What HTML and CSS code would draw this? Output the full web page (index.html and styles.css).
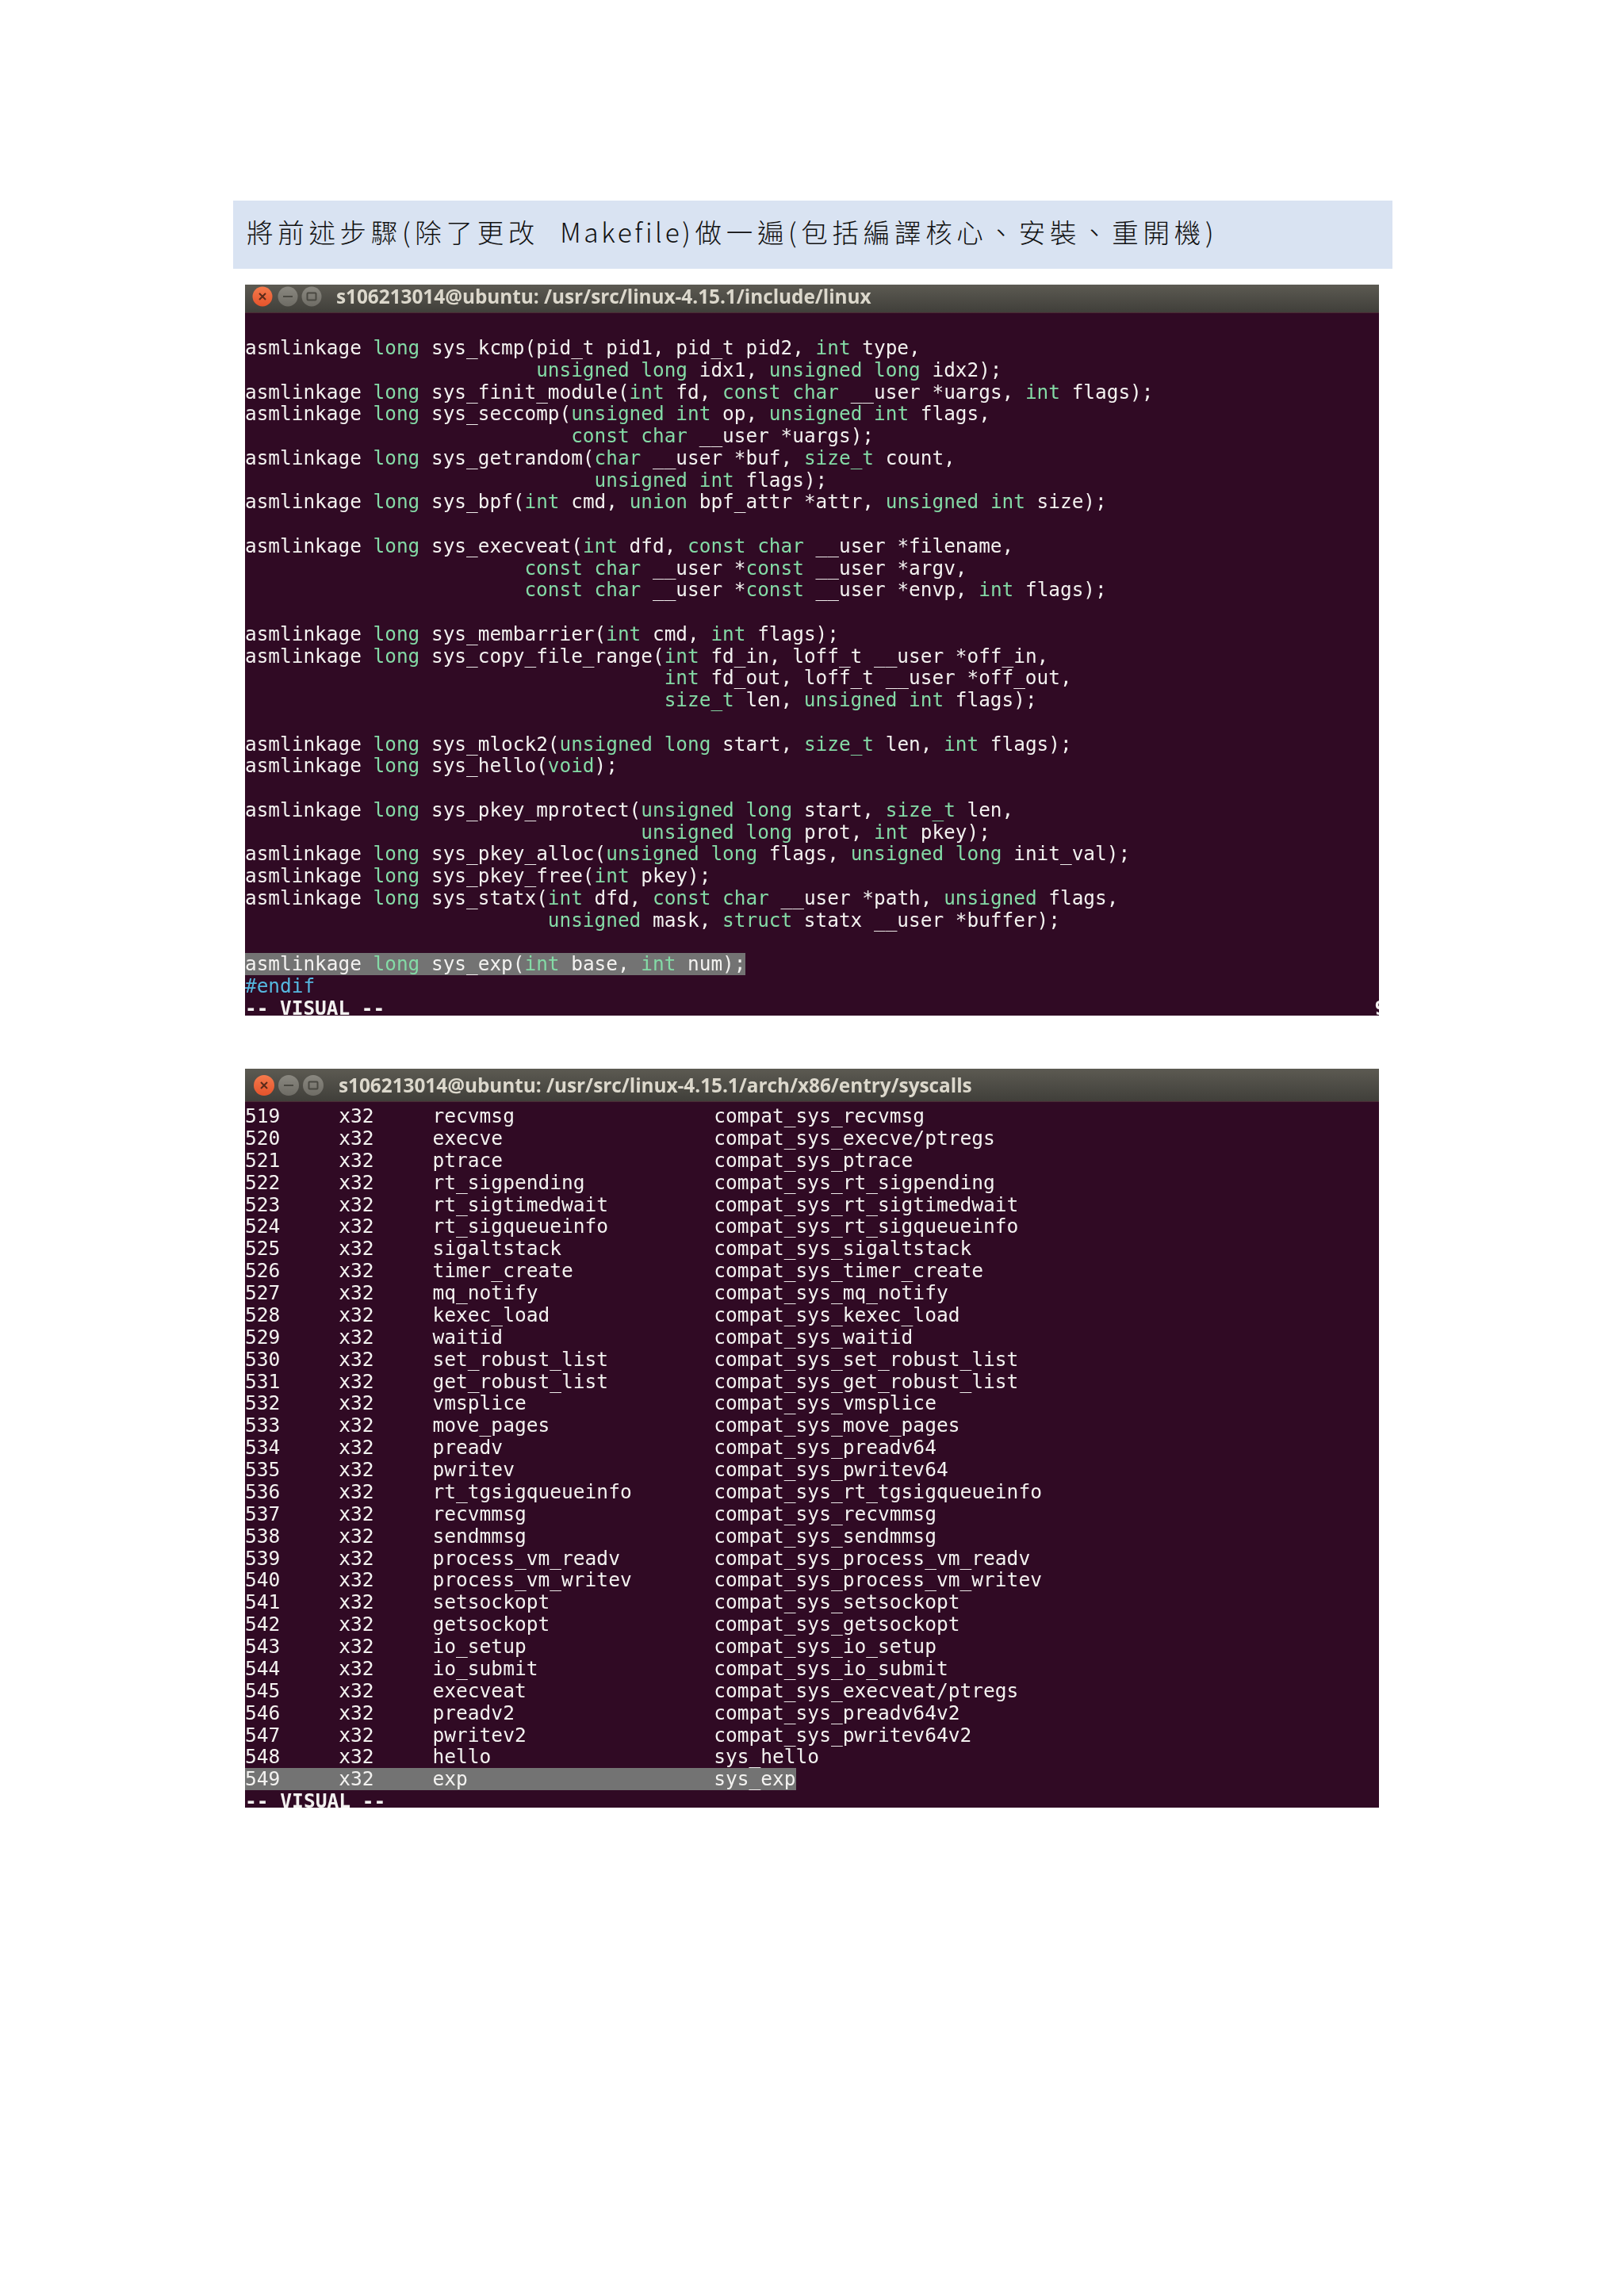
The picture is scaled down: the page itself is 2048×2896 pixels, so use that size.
FILE: index.html
```html
<!DOCTYPE html>
<html lang="zh-Hant">
<head>
<meta charset="utf-8">
<title>將前述步驟</title>
<link rel="stylesheet" href="styles.css">
</head>
<body>
<main class="page">
<h1 class="banner">將前述步驟(除了更改 &nbsp;<span class="latin">Makefile</span>)做一遍(包括編譯核心、安裝、重開機)</h1>

<section class="window window-a">
<header class="titlebar titlebar-a">
<svg class="controls" width="100" height="30" viewBox="0 0 100 30" aria-hidden="true">
<defs>
<linearGradient id="cl" x1="0" y1="0" x2="0" y2="1"><stop offset="0" stop-color="#f47a4c"/><stop offset="1" stop-color="#e5532b"/></linearGradient>
<linearGradient id="gr" x1="0" y1="0" x2="0" y2="1"><stop offset="0" stop-color="#8a8880"/><stop offset="1" stop-color="#6e6c65"/></linearGradient>
</defs>
<circle cx="22" cy="15" r="12.5" fill="url(#cl)"/>
<path d="M18 11l8 8M26 11l-8 8" stroke="#5a2a1a" stroke-width="2" fill="none"/>
<circle cx="54" cy="15" r="12.5" fill="url(#gr)"/>
<path d="M48 15h12" stroke="#4a4942" stroke-width="2" fill="none"/>
<circle cx="84" cy="15" r="12.5" fill="url(#gr)"/>
<rect x="78.5" y="10.5" width="11" height="9" rx="1" stroke="#4a4942" stroke-width="2" fill="none"/>
</svg>
<span class="title">s106213014@ubuntu: /usr/src/linux-4.15.1/include/linux</span>
</header>
<pre class="term term-a">asmlinkage <span class="k">long</span> sys_kcmp(pid_t pid1, pid_t pid2, <span class="k">int</span> type,
                         <span class="k">unsigned</span> <span class="k">long</span> idx1, <span class="k">unsigned</span> <span class="k">long</span> idx2);
asmlinkage <span class="k">long</span> sys_finit_module(<span class="k">int</span> fd, <span class="k">const</span> <span class="k">char</span> __user *uargs, <span class="k">int</span> flags);
asmlinkage <span class="k">long</span> sys_seccomp(<span class="k">unsigned</span> <span class="k">int</span> op, <span class="k">unsigned</span> <span class="k">int</span> flags,
                            <span class="k">const</span> <span class="k">char</span> __user *uargs);
asmlinkage <span class="k">long</span> sys_getrandom(<span class="k">char</span> __user *buf, <span class="k">size_t</span> count,
                              <span class="k">unsigned</span> <span class="k">int</span> flags);
asmlinkage <span class="k">long</span> sys_bpf(<span class="k">int</span> cmd, <span class="k">union</span> bpf_attr *attr, <span class="k">unsigned</span> <span class="k">int</span> size);

asmlinkage <span class="k">long</span> sys_execveat(<span class="k">int</span> dfd, <span class="k">const</span> <span class="k">char</span> __user *filename,
                        <span class="k">const</span> <span class="k">char</span> __user *<span class="k">const</span> __user *argv,
                        <span class="k">const</span> <span class="k">char</span> __user *<span class="k">const</span> __user *envp, <span class="k">int</span> flags);

asmlinkage <span class="k">long</span> sys_membarrier(<span class="k">int</span> cmd, <span class="k">int</span> flags);
asmlinkage <span class="k">long</span> sys_copy_file_range(<span class="k">int</span> fd_in, loff_t __user *off_in,
                                    <span class="k">int</span> fd_out, loff_t __user *off_out,
                                    <span class="k">size_t</span> len, <span class="k">unsigned</span> <span class="k">int</span> flags);

asmlinkage <span class="k">long</span> sys_mlock2(<span class="k">unsigned</span> <span class="k">long</span> start, <span class="k">size_t</span> len, <span class="k">int</span> flags);
asmlinkage <span class="k">long</span> sys_hello(<span class="k">void</span>);

asmlinkage <span class="k">long</span> sys_pkey_mprotect(<span class="k">unsigned</span> <span class="k">long</span> start, <span class="k">size_t</span> len,
                                  <span class="k">unsigned</span> <span class="k">long</span> prot, <span class="k">int</span> pkey);
asmlinkage <span class="k">long</span> sys_pkey_alloc(<span class="k">unsigned</span> <span class="k">long</span> flags, <span class="k">unsigned</span> <span class="k">long</span> init_val);
asmlinkage <span class="k">long</span> sys_pkey_free(<span class="k">int</span> pkey);
asmlinkage <span class="k">long</span> sys_statx(<span class="k">int</span> dfd, <span class="k">const</span> <span class="k">char</span> __user *path, <span class="k">unsigned</span> flags,
                          <span class="k">unsigned</span> mask, <span class="k">struct</span> statx __user *buffer);

<span class="sel">asmlinkage <span class="k">long</span> sys_exp(<span class="k">int</span> base, <span class="k">int</span> num);</span>
<span class="pre">#endif</span>
<b>-- VISUAL --                                                                                     9</b></pre>
</section>

<section class="window window-b">
<header class="titlebar titlebar-b">
<svg class="controls" width="103" height="30" viewBox="0 0 103 30" aria-hidden="true">
<circle cx="24" cy="15" r="13" fill="url(#cl)"/>
<path d="M20 11l8 8M28 11l-8 8" stroke="#5a2a1a" stroke-width="2" fill="none"/>
<circle cx="55" cy="15" r="13" fill="url(#gr)"/>
<path d="M49 15h12" stroke="#4a4942" stroke-width="2" fill="none"/>
<circle cx="86" cy="15" r="13" fill="url(#gr)"/>
<rect x="80.5" y="10.5" width="11" height="9" rx="1" stroke="#4a4942" stroke-width="2" fill="none"/>
</svg>
<span class="title">s106213014@ubuntu: /usr/src/linux-4.15.1/arch/x86/entry/syscalls</span>
</header>
<pre class="term term-b">519     x32     recvmsg                 compat_sys_recvmsg
520     x32     execve                  compat_sys_execve/ptregs
521     x32     ptrace                  compat_sys_ptrace
522     x32     rt_sigpending           compat_sys_rt_sigpending
523     x32     rt_sigtimedwait         compat_sys_rt_sigtimedwait
524     x32     rt_sigqueueinfo         compat_sys_rt_sigqueueinfo
525     x32     sigaltstack             compat_sys_sigaltstack
526     x32     timer_create            compat_sys_timer_create
527     x32     mq_notify               compat_sys_mq_notify
528     x32     kexec_load              compat_sys_kexec_load
529     x32     waitid                  compat_sys_waitid
530     x32     set_robust_list         compat_sys_set_robust_list
531     x32     get_robust_list         compat_sys_get_robust_list
532     x32     vmsplice                compat_sys_vmsplice
533     x32     move_pages              compat_sys_move_pages
534     x32     preadv                  compat_sys_preadv64
535     x32     pwritev                 compat_sys_pwritev64
536     x32     rt_tgsigqueueinfo       compat_sys_rt_tgsigqueueinfo
537     x32     recvmmsg                compat_sys_recvmmsg
538     x32     sendmmsg                compat_sys_sendmmsg
539     x32     process_vm_readv        compat_sys_process_vm_readv
540     x32     process_vm_writev       compat_sys_process_vm_writev
541     x32     setsockopt              compat_sys_setsockopt
542     x32     getsockopt              compat_sys_getsockopt
543     x32     io_setup                compat_sys_io_setup
544     x32     io_submit               compat_sys_io_submit
545     x32     execveat                compat_sys_execveat/ptregs
546     x32     preadv2                 compat_sys_preadv64v2
547     x32     pwritev2                compat_sys_pwritev64v2
548     x32     hello                   sys_hello
<span class="sel">549     x32     exp                     sys_exp</span>
<b>-- VISUAL --</b></pre>
</section>
</main>
</body>
</html>
```
FILE: styles.css
```css
html, body {
  margin: 0;
  background: #fff;
}

.page {
  box-sizing: border-box;
  width: 2048px;
  min-height: 2896px;
  padding: 253px 292px 0 294px;
}

.banner {
  box-sizing: border-box;
  height: 86px;
  margin: 0 0 20px;
  padding: 16px 0 0 17px;
  background: #d9e3f2;
  color: #111;
  font: 300 33.5px/46px "Noto Sans CJK TC", "Noto Sans", sans-serif;
  letter-spacing: 5.7px;
  white-space: nowrap;
}

.latin {
  letter-spacing: 3.6px;
}

.window {
  margin: 0 17px 0 15px;
  overflow: hidden;
  background: #300a24;
  filter: blur(0.35px);
}

.window-a {
  height: 922px;
  margin-bottom: 67px;
}

.window-b {
  height: 932px;
}

.titlebar {
  display: flex;
  align-items: center;
  box-sizing: border-box;
  background: linear-gradient(#5c5a52, #403f3a);
  border-bottom: 1px solid #4b2a35;
}

.titlebar-a {
  height: 36px;
}

.titlebar-a .controls,
.titlebar-a .title {
  margin-top: -5px;
}

.titlebar-b {
  height: 42px;
}

.controls {
  flex: none;
  margin-right: 15px;
}

.title {
  color: #dcd8cc;
  font: 700 24.4px/26px "Open Sans", "Noto Sans", sans-serif;
  letter-spacing: -0.05px;
  white-space: pre;
}

.term {
  margin: 0;
  color: #f3f2f0;
  font-family: "DejaVu Sans Mono", monospace;
  font-size: 24.4px;
  line-height: 27.75px;
  white-space: pre;
}

.term-a {
  padding-top: 30px;
}

.term-b {
  padding-top: 4px;
  font-size: 24.55px;
  line-height: 27.87px;
}

.k {
  color: #84dba6;
}

.pre {
  color: #56b8e0;
}

.sel {
  display: inline-block;
  background: #737373;
}
```
